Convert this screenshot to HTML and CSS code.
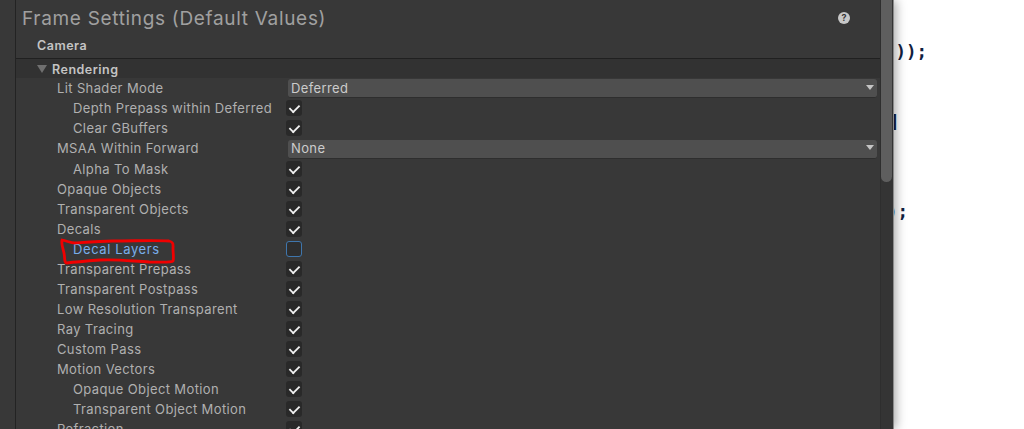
FILE: index.html
```html
<!DOCTYPE html>
<html lang="en">
<head>
  <meta charset="UTF-8" />
  <title>Frame Settings</title>
  <link rel="stylesheet" href="styles.css">
</head>
<body>
  <div class="inspector">
    <div class="gutter"></div>
    <div class="content">
      <div class="title-row">
        <h1>Frame Settings (Default Values)</h1>
        <span class="help">?</span>
      </div>
      <div class="camera">Camera</div>
      <div class="section"><span class="arrow"></span>Rendering</div>

      <div class="row">
        <label>Lit Shader Mode</label>
        <div class="dropdown">Deferred<span class="caret"></span></div>
      </div>
      <div class="row sub"><label>Depth Prepass within Deferred</label><span class="check"></span></div>
      <div class="row sub"><label>Clear GBuffers</label><span class="check"></span></div>
      <div class="row msaa">
        <label>MSAA Within Forward</label>
        <div class="dropdown">None<span class="caret"></span></div>
      </div>
      <div class="row sub"><label>Alpha To Mask</label><span class="check"></span></div>
      <div class="row"><label>Opaque Objects</label><span class="check"></span></div>
      <div class="row"><label>Transparent Objects</label><span class="check"></span></div>
      <div class="row"><label>Decals</label><span class="check"></span></div>
      <div class="row sub changed">
        <label>Decal Layers</label><span class="check off"></span>
        <svg class="scribble" width="118" height="27" viewBox="0 0 118 27">
          <path d="M3 2 C8 3 12 5 16 5 C30 4 42 3 54 3 C75 3 95 2 110 3 C115 4 114 7 114 11 C114 15 115 20 114 23 C112 25 100 24 90 24 C72 23 58 21 41 22 C28 23 16 24 8 25 C5 25 6 20 5 15 C4 10 2 6 3 2 Z" />
        </svg>
      </div>
      <div class="row"><label>Transparent Prepass</label><span class="check"></span></div>
      <div class="row"><label>Transparent Postpass</label><span class="check"></span></div>
      <div class="row"><label>Low Resolution Transparent</label><span class="check"></span></div>
      <div class="row"><label>Ray Tracing</label><span class="check"></span></div>
      <div class="row"><label>Custom Pass</label><span class="check"></span></div>
      <div class="row"><label>Motion Vectors</label><span class="check"></span></div>
      <div class="row sub"><label>Opaque Object Motion</label><span class="check"></span></div>
      <div class="row sub"><label>Transparent Object Motion</label><span class="check"></span></div>
      <div class="row"><label>Refraction</label><span class="check"></span></div>
    </div>
    <div class="scrollbar"><div class="thumb"></div></div>
  </div>

  <pre class="code"><code class="line-a">());</code><code class="line-b">]</code><code class="line-c">);</code></pre>
</body>
</html>
```

FILE: styles.css
```css
* {
  box-sizing: border-box;
}

html, body {
  margin: 0;
  height: 429px;
  overflow: hidden;
}

body {
  display: flex;
  background: #ffffff;
  font-family: 'Inter', 'Noto Sans', sans-serif;
}

.inspector {
  display: flex;
  width: 894px;
  height: 429px;
  flex-shrink: 0;
  background: #383838;
  box-shadow: 2px 0 10px rgba(0, 0, 0, 0.35);
  border-right: 1px solid #8a8a8a;
  position: relative;
  z-index: 1;
}

.gutter {
  width: 16px;
  flex-shrink: 0;
  border-right: 1px solid #232323;
}

.content {
  flex: 1;
  min-width: 0;
}

.title-row {
  height: 37px;
  display: flex;
  align-items: center;
  justify-content: space-between;
  padding: 0 30px 1px 6px;
}

h1 {
  margin: 0;
  font-size: 19px;
  font-weight: 400;
  letter-spacing: 0.68px;
  color: #a0a0a0;
}

.help {
  width: 12px;
  height: 12px;
  border-radius: 50%;
  background: #c8c8c8;
  color: #383838;
  font-size: 9px;
  font-weight: 700;
  line-height: 12px;
  text-align: center;
}

.camera {
  height: 22px;
  padding-left: 21px;
  font-size: 12.5px;
  font-weight: 600;
  letter-spacing: 0.5px;
  line-height: 18px;
  color: #c4c4c4;
  border-bottom: 1px solid #202020;
}

.section {
  height: 19px;
  display: flex;
  align-items: center;
  padding: 1px 0 0 21px;
  background: #323232;
  font-size: 12.5px;
  font-weight: 600;
  letter-spacing: 0.5px;
  color: #c4c4c4;
}

.arrow {
  width: 0;
  height: 0;
  margin: -1px 5px 0 0;
  border-left: 5px solid transparent;
  border-right: 5px solid transparent;
  border-top: 8px solid #707070;
}

.row {
  height: 20px;
  display: flex;
  align-items: center;
  padding-left: 41px;
  position: relative;
  font-size: 13px;
  font-weight: 400;
  letter-spacing: 0.37px;
  color: #b0b0b0;
}

.row.msaa {
  margin-top: 1px;
}

.row.msaa label {
  margin-bottom: 2px;
}

.row.msaa .dropdown {
  padding-bottom: 2px;
}

.row.sub {
  padding-left: 57px;
}

.row label {
  width: 229px;
  white-space: nowrap;
}

.row.sub label {
  width: 213px;
}

.changed label {
  color: #78aeea;
  letter-spacing: 0.6px;
}

.check {
  width: 16px;
  height: 16px;
  display: flex;
  align-items: center;
  justify-content: center;
  background: #292929;
  border-radius: 3px;
}

.check::after {
  content: "";
  width: 9px;
  height: 5px;
  margin-top: -2px;
  border-left: 2px solid #f0f0f0;
  border-bottom: 2px solid #f0f0f0;
  transform: rotate(-45deg) scale(0.9);
}

.check.off {
  background: #2e2e2e;
  border: 1px solid #3f76ad;
}

.check.off::after {
  display: none;
}

.dropdown {
  width: 589px;
  height: 19px;
  margin-left: 2px;
  padding-left: 3px;
  display: flex;
  align-items: center;
  justify-content: space-between;
  background: #4f4f4f;
  border-radius: 3px;
  border-bottom: 1px solid #2e2e2e;
  color: #cccccc;
}

.caret {
  width: 0;
  height: 0;
  margin-right: 3px;
  border-left: 4px solid transparent;
  border-right: 4px solid transparent;
  border-top: 5px solid #c4c4c4;
}

.scribble {
  position: absolute;
  left: 43px;
  top: -1px;
  fill: none;
  stroke: #f00000;
  stroke-width: 2.8;
  stroke-linejoin: round;
}

.scrollbar {
  width: 13px;
  flex-shrink: 0;
  background: #343434;
  border-left: 1px solid #2e2e2e;
}

.thumb {
  width: 11px;
  height: 182px;
  background: #5e5e5e;
  border-radius: 0 0 6px 6px;
}

.code {
  margin: 0;
  display: flex;
  flex-direction: column;
  padding-top: 42px;
  font-family: 'Liberation Mono', monospace;
  font-size: 17.5px;
  font-weight: 700;
  line-height: 20px;
  color: #102040;
}

.line-a {
  margin-left: -9px;
}

.line-b {
  margin-top: 50px;
  margin-left: -5px;
}

.line-c {
  margin-top: 70px;
  margin-left: -7px;
}
```
